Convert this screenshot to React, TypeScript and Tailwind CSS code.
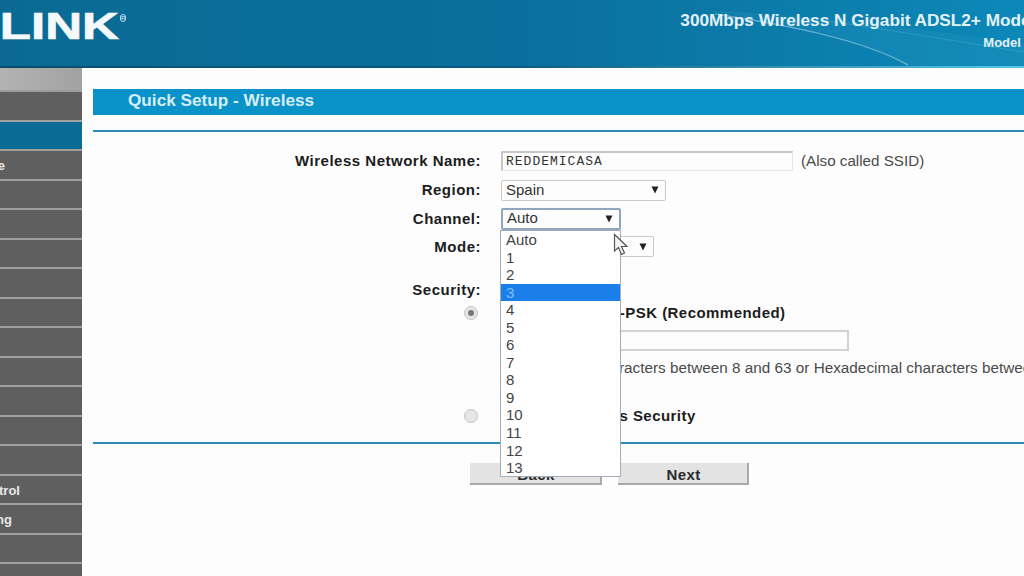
import React from 'react';

// menu rows below the light top row; only the ends of these labels are on screen
const sidebarRows = [
  { label: '' },
  { label: '', active: true },
  { label: 'Operation Mode', edge: 'w-[5px]' },
  { label: '' },
  { label: '' },
  { label: '' },
  { label: '' },
  { label: '' },
  { label: '' },
  { label: '' },
  { label: '' },
  { label: '' },
  { label: '' },
  { label: 'Access Control', edge: 'w-[20px]' },
  { label: 'Static Routing', edge: 'w-[12px]' },
  { label: '' },
  { label: '' },
];

const channels = ['Auto', '1', '2', '3', '4', '5', '6', '7', '8', '9', '10', '11', '12', '13'];

const Arrow = () => (
  <svg width="8" height="8" viewBox="0 0 8 8" className="shrink-0">
    <path d="M0.5 0.5h7L4 7.5z" fill="#222" />
  </svg>
);

const Select = ({ value, width, focused }: { value: string; width: string; focused?: boolean }) => (
  <div
    className={`${width} flex items-center justify-between rounded-[2px] border bg-[#fdfdfd] pr-[6px] pl-[4px] text-[15px] text-[#333] ${
      focused ? 'h-[22px] border-2 border-[#8fa6bd]' : 'h-[21px] border-[#c9c9c9]'
    }`}
  >
    <span>{value}</span>
    <Arrow />
  </div>
);

const FormRow = ({ label, height, children }: { label: string; height: string; children?: React.ReactNode }) => (
  <div className={`${height} flex items-center`}>
    <div className="w-[388px] pt-[1px] text-right text-[15px] font-bold tracking-[0.5px] text-[#1c1c1c]">{label}</div>
    <div className="ml-[20px] flex items-center">{children}</div>
  </div>
);

const Radio = ({ checked }: { checked?: boolean }) => (
  <div className="ml-[371px] flex h-[14px] w-[14px] shrink-0 items-center justify-center rounded-full border border-[#c4c4c4] bg-[#e6e6e6]">
    {checked && <div className="h-[6px] w-[6px] rounded-full bg-[#777]" />}
  </div>
);

export default function App() {
  return (
    <div className="relative h-[576px] w-[1024px] overflow-hidden bg-[#fdfdfd] font-['Liberation_Sans',sans-serif]">
      {/* header */}
      <header className="relative flex h-[68px] items-start overflow-hidden bg-gradient-to-r from-[#0a6a94] via-[#0a6f9c] to-[#0c88b8]">
        <svg className="absolute inset-0" width="1024" height="68" viewBox="0 0 1024 68" fill="none">
          <path d="M700 10C780 22 860 36 910 66H1024V44C930 30 810 14 700 10z" fill="#2f9cc6" fillOpacity="0.22" />
          <path d="M715 14C780 24 860 38 908 65" stroke="#a6d8ea" strokeOpacity="0.55" strokeWidth="1.5" />
          <path d="M820 20C880 28 960 42 1024 52" stroke="#a6d8ea" strokeOpacity="0.18" strokeWidth="1" />
        </svg>
        <div className="absolute right-0 bottom-0 left-0 h-[2px] bg-gradient-to-r from-[#0a4d6e] via-[#0b5a7e] to-[#5cc6e6]" />
        <div className="relative mt-[7px] flex w-[119px] origin-right scale-x-[1.38] justify-end text-[37px] leading-[40px] font-bold whitespace-nowrap text-[#f4f9fb] [-webkit-text-stroke:0.7px_#f4f9fb]">
          TP-LINK
        </div>
        <div className="relative mt-[14px] ml-[1px] flex h-[8px] w-[8px] items-center justify-center rounded-full border border-[#b9d9e6] text-[6px] text-[#d9edf5]">
          R
        </div>
        <div className="relative ml-[554px] flex flex-col items-start whitespace-nowrap">
          <div className="mt-[10px] text-[17.2px] leading-[20px] font-bold text-[#e4f1f6]">
            300Mbps Wireless N Gigabit ADSL2+ Modem Router
          </div>
          <div className="mt-[5px] ml-[303px] text-[13px] leading-[15px] font-bold text-[#e4f1f6]">
            Model No. TD-W8960N
          </div>
        </div>
      </header>

      <div className="flex">
        {/* sidebar */}
        <aside className="h-[508px] w-[82px] shrink-0 overflow-hidden">
          <div className="h-[24px] border-b-2 border-[#9c9c9c] bg-gradient-to-r from-[#b2b2b2] to-[#a2a2a2]" />
          {sidebarRows.map((row, i) => (
            <div
              key={i}
              className={`flex h-[29.5px] items-center border-b-2 border-[#9f9f9f] pt-[2px] text-[13px] font-bold text-[#e8e8e8] ${
                row.active ? 'bg-[#0a6c94]' : 'bg-[#5f5f5f]'
              }`}
            >
              {row.label && <div className={`${row.edge} flex justify-end whitespace-nowrap`}>{row.label}</div>}
            </div>
          ))}
        </aside>

        {/* main */}
        <main className="relative ml-[11px] min-w-0 flex-1">
          <div className="mt-[21px] flex h-[26px] items-center bg-[#0a93c8] pb-[3px] pl-[35px] text-[17.2px] font-bold text-[#d6eef7]">
            Quick Setup - Wireless
          </div>
          <div className="mt-[15px] h-[2px] bg-[#2a8db5]" />

          <div className="mt-[15px]">
            <FormRow label="Wireless Network Name:" height="h-[28px]">
              <div className="flex h-[20px] w-[292px] items-center border-t-2 border-r border-b border-l-2 border-t-[#c6c6c6] border-r-[#e6e6e6] border-b-[#e6e6e6] border-l-[#c6c6c6] pl-[3px] font-['Liberation_Mono',monospace] text-[13px] tracking-[1px] text-[#333]">
                REDDEMICASA
              </div>
              <span className="ml-[8px] text-[15.2px] whitespace-nowrap text-[#4a4a4a]">(Also called SSID)</span>
            </FormRow>
            <div className="mt-[1px]" />
            <FormRow label="Region:" height="h-[28px]">
              <Select value="Spain" width="w-[165px]" />
            </FormRow>
            <FormRow label="Channel:" height="h-[29px]">
              <Select value="Auto" width="w-[120px]" focused />
            </FormRow>
            <FormRow label="Mode:" height="h-[27px]">
              <Select value="11bgn mixed" width="w-[153px]" />
            </FormRow>
            <div className="mt-[16px]" />
            <FormRow label="Security:" height="h-[28px]" />

            <div className="mt-[-3px] flex h-[24px] items-center">
              <Radio checked />
              <span className="ml-[58px] text-[15px] font-bold tracking-[0.45px] whitespace-nowrap text-[#1c1c1c]">
                WPA/WPA2-PSK (Recommended)
              </span>
            </div>
            <div className="mt-[5px] ml-[408px] h-[21px] w-[348px] border-2 border-[#d2d2d2] bg-[#fdfdfd]" />
            <div className="mt-[8px] ml-[412px] h-[18px] text-[15.3px] leading-[18px] whitespace-nowrap text-[#4a4a4a]">
              (Enter ASCII characters between 8 and 63 or Hexadecimal characters between 8 and 64.)
            </div>
            <div className="mt-[27px] flex h-[24px] items-center">
              <Radio />
              <span className="ml-[24px] text-[15px] font-bold tracking-[0.45px] whitespace-nowrap text-[#1c1c1c]">
                Disable Wireless Security
              </span>
            </div>
          </div>

          <div className="mt-[14px] h-[2px] bg-[#2a8db5]" />
          <div className="mt-[19px] ml-[377px] flex gap-[16px]">
            <button className="h-[22px] w-[132px] border-r-2 border-b-2 border-[#a9a9a9] bg-[#e3e3e3] pt-[1px] pl-[2px] text-[15px] font-bold tracking-[0.4px] text-[#2a2a2a]">
              Back
            </button>
            <button className="h-[22px] w-[131px] border-r-2 border-b-2 border-[#a9a9a9] bg-[#e3e3e3] pt-[1px] pl-[2px] text-[15px] font-bold tracking-[0.4px] text-[#2a2a2a]">
              Next
            </button>
          </div>
        </main>
      </div>

      {/* open channel dropdown */}
      <ul className="absolute top-[230px] left-[500px] h-[247px] w-[121px] border border-[#a3adb8] bg-white text-[15px] text-[#444]">
        {channels.map(c => (
          <li
            key={c}
            className={`h-[17.55px] pl-[5px] leading-[17.55px] ${c === '3' ? 'bg-[#1a7fe8] text-[#7fc0f5]' : ''}`}
          >
            {c}
          </li>
        ))}
      </ul>

      {/* mouse cursor */}
      <svg className="absolute top-[233px] left-[613px]" width="17" height="24" viewBox="0 0 17 24">
        <path d="M1.5 1.5V18L5.5 14.5L8.5 21.5L11.5 20L8.5 13.5H14z" fill="#f4f4f4" stroke="#555" strokeWidth="1.2" />
      </svg>
    </div>
  );
}
